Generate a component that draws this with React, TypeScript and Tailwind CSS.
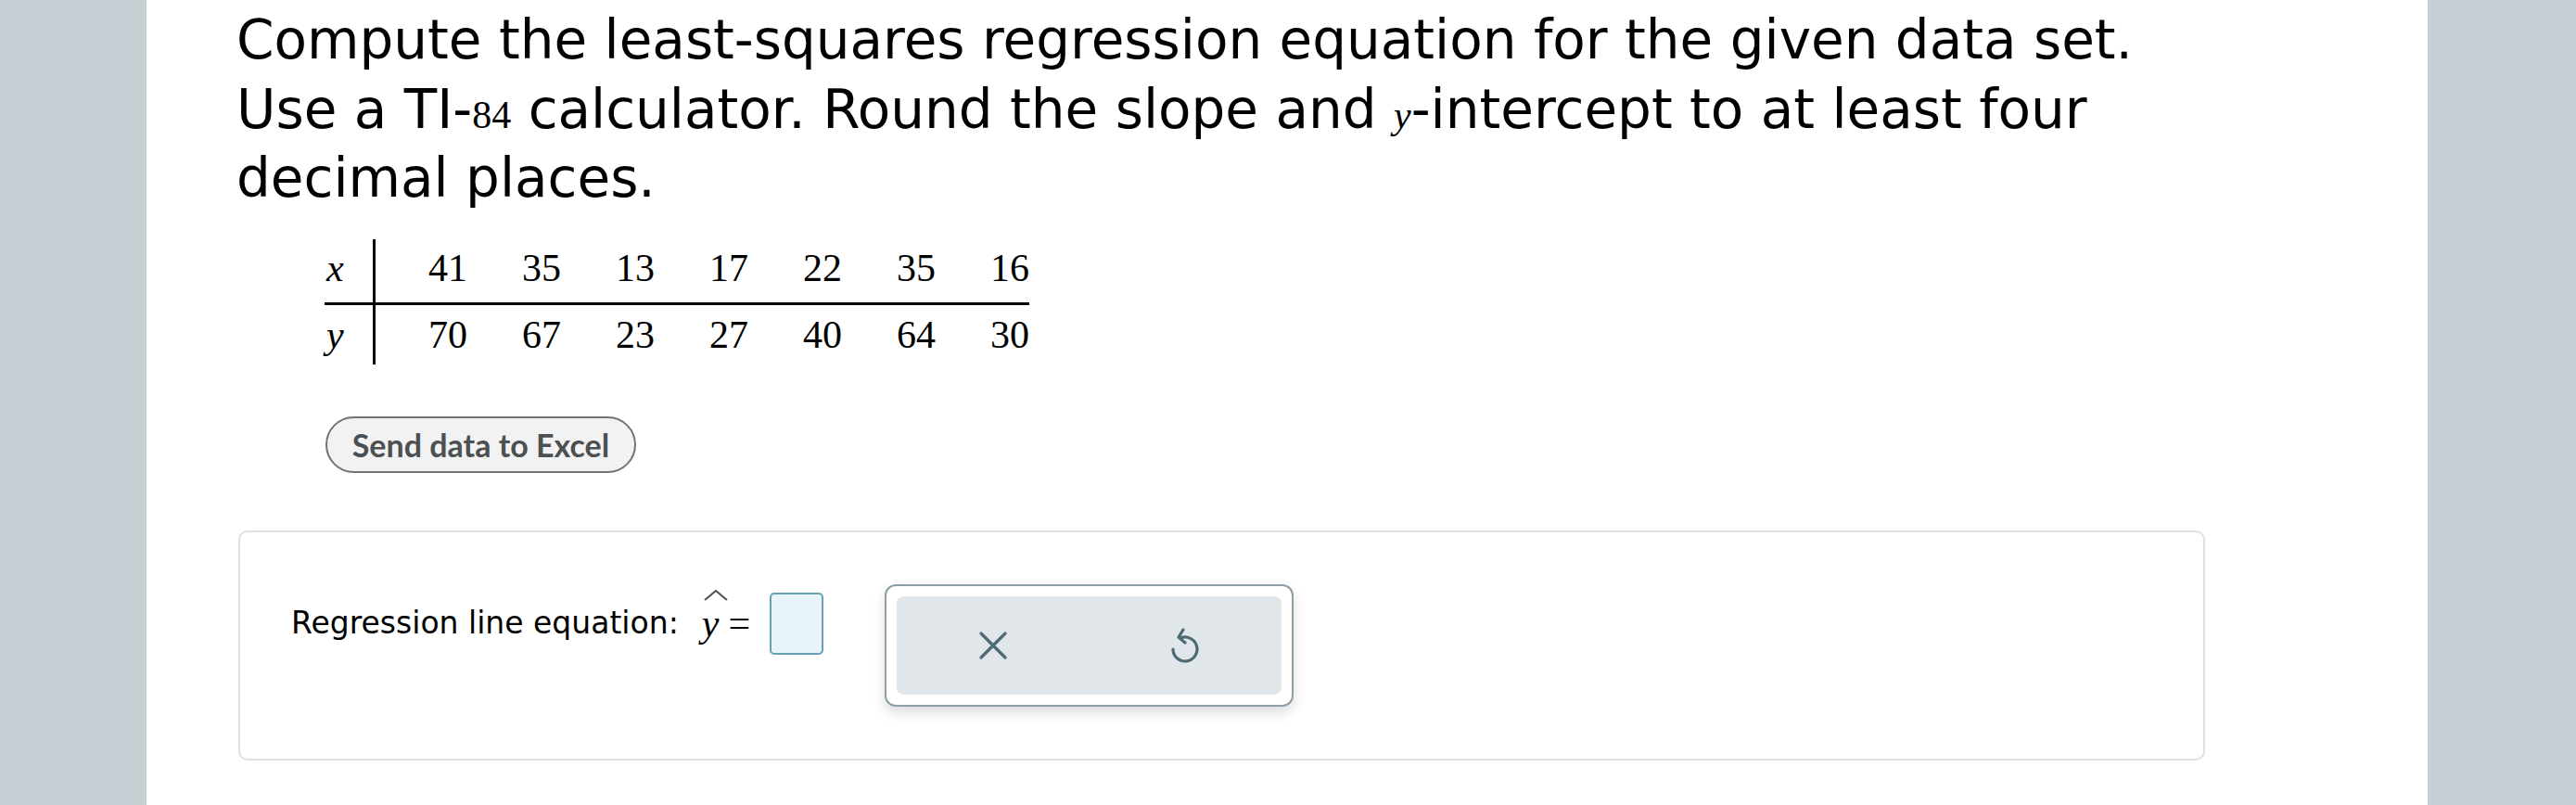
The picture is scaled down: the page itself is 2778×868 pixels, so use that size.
export default function App() {
  const xs = [41, 35, 13, 17, 22, 35, 16];
  const ys = [70, 67, 23, 27, 40, 64, 30];
  const serif = "font-['Liberation_Serif','Times_New_Roman',serif]";

  return (
    <div className="flex h-[868px] w-full bg-[#c5cfd4]">
      <div className="w-[158px] shrink-0" />
      <main className="w-[2460px] shrink-0 bg-white pl-[97px] pt-[6px] text-black">
        <div className="w-[2121px]">
          <p className="font-['DejaVu_Sans',sans-serif] text-[58px] leading-[74.5px]">
            Compute the least-squares regression equation for the given data set.
            <br />
            Use a TI-<span className={`${serif} text-[42px] leading-none`}>84</span> calculator. Round the slope and{" "}
            <span className={`${serif} text-[42px] leading-none italic`}>y</span>-intercept to at least four
            <br />
            decimal places.
          </p>

          <table className={`${serif} mt-[28px] ml-[95px] border-collapse text-[42px] leading-none`}>
            <tbody>
              <tr className="h-[70px] border-b-[3px] border-black">
                <td className="w-[53px] border-r-[3px] border-black pb-[5px] pl-[2px] italic">x</td>
                {xs.map((v, i) => (
                  <td key={i} className="w-[101px] pb-[5px] text-right">{v}</td>
                ))}
              </tr>
              <tr className="h-[65px]">
                <td className="w-[53px] border-r-[3px] border-black pl-[2px] italic">y</td>
                {ys.map((v, i) => (
                  <td key={i} className="w-[101px] text-right">{v}</td>
                ))}
              </tr>
            </tbody>
          </table>

          <button className="mt-[56px] ml-[96px] flex h-[61px] w-[335px] items-center justify-center rounded-full border-2 border-[#6f7577] bg-[#f2f2f2] font-['Lato',sans-serif] text-[34px] font-bold text-[#4b5052]">
            Send data to Excel
          </button>

          <div className="mt-[62px] ml-[2px] flex h-[248px] w-[2121px] items-start rounded-[10px] border-2 border-[#dbe2e5] pl-[55px] pt-[56px]">
            <div className="mt-[9px] flex h-[67px] shrink-0 items-center whitespace-nowrap">
              <span className="font-['DejaVu_Sans',sans-serif] text-[33px]">Regression line equation:</span>
              <span className={`${serif} relative ml-[25px] text-[42px] leading-none italic`}>
                y
                <svg className="absolute -top-[16px] left-[1px]" width="28" height="14" viewBox="0 0 28 14">
                  <path d="M2 12 L14 2 L26 12" fill="none" stroke="#555" strokeWidth="2.2" strokeLinejoin="round" />
                </svg>
              </span>
              <span className={`${serif} ml-[10px] text-[42px] leading-none`}>=</span>
              <div className="ml-[21px] h-[67px] w-[58px] rounded-[5px] border-2 border-[#6aa0b5] bg-[#e9f4f8]" />
            </div>

            <div className="ml-[66px] h-[132px] w-[441px] shrink-0 rounded-[12px] border-2 border-[#8d9ea6] bg-white p-[11px] shadow-[0_6px_14px_rgba(0,0,0,0.14)]">
              <div className="flex h-full rounded-[8px] bg-[#e0e6e9]">
                <button className="flex flex-1 items-center justify-center">
                  <svg width="32" height="32" viewBox="0 0 32 32">
                    <path d="M3 3 L29 29 M29 3 L3 29" stroke="#4e6a76" strokeWidth="3.2" strokeLinecap="round" />
                  </svg>
                </button>
                <button className="flex flex-1 items-center justify-center">
                  <svg width="32" height="40" viewBox="0 0 32 40">
                    <path
                      d="M3 24 A13 13 0 1 0 11 12"
                      fill="none"
                      stroke="#4e6a76"
                      strokeWidth="3.2"
                      strokeLinecap="round"
                    />
                    <path d="M14 3 L9 11 L16 17" fill="none" stroke="#4e6a76" strokeWidth="3.2" strokeLinecap="round" strokeLinejoin="round" />
                  </svg>
                </button>
              </div>
            </div>
          </div>
        </div>
      </main>
      <div className="flex-1" />
    </div>
  );
}
